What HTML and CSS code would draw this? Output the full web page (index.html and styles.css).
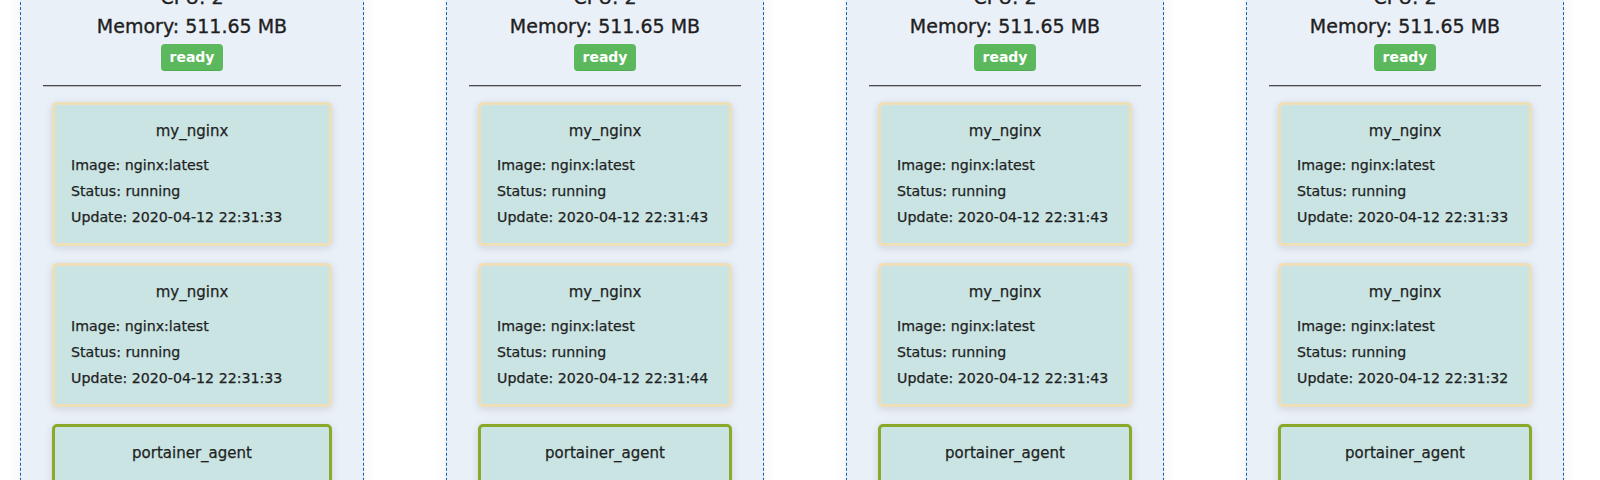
FILE: index.html
```html
<!DOCTYPE html>
<html lang="en">
<head>
    <meta charset="UTF-8">
    <meta name="viewport" content="width=device-width, initial-scale=1.0">
    <title>Swarm Visualizer</title>
    <link rel="stylesheet" href="styles.css">
</head>
<body>
    <div class="cluster">
        <div class="node node-wide">
            <div class="node-stat">CPU: 2</div>
            <div class="node-stat">Memory: 511.65 MB</div>
            <div class="node-status"><span class="badge">ready</span></div>
            <hr class="node-divider">

            <div class="task">
                <div class="task-name">my_nginx</div>
                <div class="task-line">Image: nginx:latest</div>
                <div class="task-line">Status: running</div>
                <div class="task-line">Update: 2020-04-12 22:31:33</div>
            </div>
            <div class="task">
                <div class="task-name">my_nginx</div>
                <div class="task-line">Image: nginx:latest</div>
                <div class="task-line">Status: running</div>
                <div class="task-line">Update: 2020-04-12 22:31:33</div>
            </div>
            <div class="task task-agent">
                <div class="task-name">portainer_agent</div>
                <div class="task-line">Image: portainer/agent:latest</div>
                <div class="task-line">Status: running</div>
                <div class="task-line">Update: 2020-04-12 22:31:20</div>
            </div>
        </div>

        <div class="node">
            <div class="node-stat">CPU: 2</div>
            <div class="node-stat">Memory: 511.65 MB</div>
            <div class="node-status"><span class="badge">ready</span></div>
            <hr class="node-divider">

            <div class="task">
                <div class="task-name">my_nginx</div>
                <div class="task-line">Image: nginx:latest</div>
                <div class="task-line">Status: running</div>
                <div class="task-line">Update: 2020-04-12 22:31:43</div>
            </div>
            <div class="task">
                <div class="task-name">my_nginx</div>
                <div class="task-line">Image: nginx:latest</div>
                <div class="task-line">Status: running</div>
                <div class="task-line">Update: 2020-04-12 22:31:44</div>
            </div>
            <div class="task task-agent">
                <div class="task-name">portainer_agent</div>
                <div class="task-line">Image: portainer/agent:latest</div>
                <div class="task-line">Status: running</div>
                <div class="task-line">Update: 2020-04-12 22:31:21</div>
            </div>
        </div>

        <div class="node">
            <div class="node-stat">CPU: 2</div>
            <div class="node-stat">Memory: 511.65 MB</div>
            <div class="node-status"><span class="badge">ready</span></div>
            <hr class="node-divider">

            <div class="task">
                <div class="task-name">my_nginx</div>
                <div class="task-line">Image: nginx:latest</div>
                <div class="task-line">Status: running</div>
                <div class="task-line">Update: 2020-04-12 22:31:43</div>
            </div>
            <div class="task">
                <div class="task-name">my_nginx</div>
                <div class="task-line">Image: nginx:latest</div>
                <div class="task-line">Status: running</div>
                <div class="task-line">Update: 2020-04-12 22:31:43</div>
            </div>
            <div class="task task-agent">
                <div class="task-name">portainer_agent</div>
                <div class="task-line">Image: portainer/agent:latest</div>
                <div class="task-line">Status: running</div>
                <div class="task-line">Update: 2020-04-12 22:31:21</div>
            </div>
        </div>

        <div class="node">
            <div class="node-stat">CPU: 2</div>
            <div class="node-stat">Memory: 511.65 MB</div>
            <div class="node-status"><span class="badge">ready</span></div>
            <hr class="node-divider">

            <div class="task">
                <div class="task-name">my_nginx</div>
                <div class="task-line">Image: nginx:latest</div>
                <div class="task-line">Status: running</div>
                <div class="task-line">Update: 2020-04-12 22:31:33</div>
            </div>
            <div class="task">
                <div class="task-name">my_nginx</div>
                <div class="task-line">Image: nginx:latest</div>
                <div class="task-line">Status: running</div>
                <div class="task-line">Update: 2020-04-12 22:31:32</div>
            </div>
            <div class="task task-agent">
                <div class="task-name">portainer_agent</div>
                <div class="task-line">Image: portainer/agent:latest</div>
                <div class="task-line">Status: running</div>
                <div class="task-line">Update: 2020-04-12 22:31:20</div>
            </div>
        </div>
    </div>
</body>
</html>
```

FILE: styles.css
```css
* {
    margin: 0;
    padding: 0;
    box-sizing: border-box;
}

body {
    font-family: 'DejaVu Sans', 'Noto Sans', sans-serif;
    background: #fff;
    color: #1f1f1f;
    overflow: hidden;
}

.cluster {
    display: flex;
    align-items: flex-start;
    gap: 82px;
    padding-left: 20px;
    margin-top: -28px;
}

.node {
    width: 318px;
    flex-shrink: 0;
    background: #eaf0f8;
    border: 1px dashed #1565c0;
    padding: 10px 22px 20px;
    text-align: center;
    box-shadow: 0 0 14px rgba(0, 0, 0, 0.06);
}

.node-wide {
    width: 344px;
}

.node-stat {
    font-size: 19px;
    line-height: 29px;
    -webkit-text-stroke: 0.35px currentColor;
}

.node-status {
    display: flex;
    justify-content: center;
    margin-top: 3px;
}

.badge {
    display: block;
    height: 27px;
    padding: 0 8.5px;
    line-height: 26px;
    font-size: 14px;
    font-weight: 700;
    color: #fff;
    background: #5cb85c;
    border-bottom: 1px solid #4cae4c;
    border-radius: 4px;
}

.node-divider {
    border: 0;
    border-top: 1px solid #4a4a4a;
    box-shadow: 0 1px 0 rgba(74, 74, 74, 0.3);
    margin: 14px 0 16px;
}

.task {
    margin: 0 9px 17px;
    height: 144px;
    background: #c9e4e3;
    border: 3px solid #efdfb9;
    border-radius: 5px;
    padding: 13px 16px;
    text-align: left;
    box-shadow: 0 2px 9px rgba(0, 0, 0, 0.12);
    -webkit-text-stroke: 0.25px currentColor;
}

.task-agent {
    border-color: #8aa92a;
}

.task-name {
    font-size: 15px;
    line-height: 26px;
    text-align: center;
    margin-bottom: 8px;
}

.task-line {
    font-size: 14.2px;
    line-height: 26px;
}
```
